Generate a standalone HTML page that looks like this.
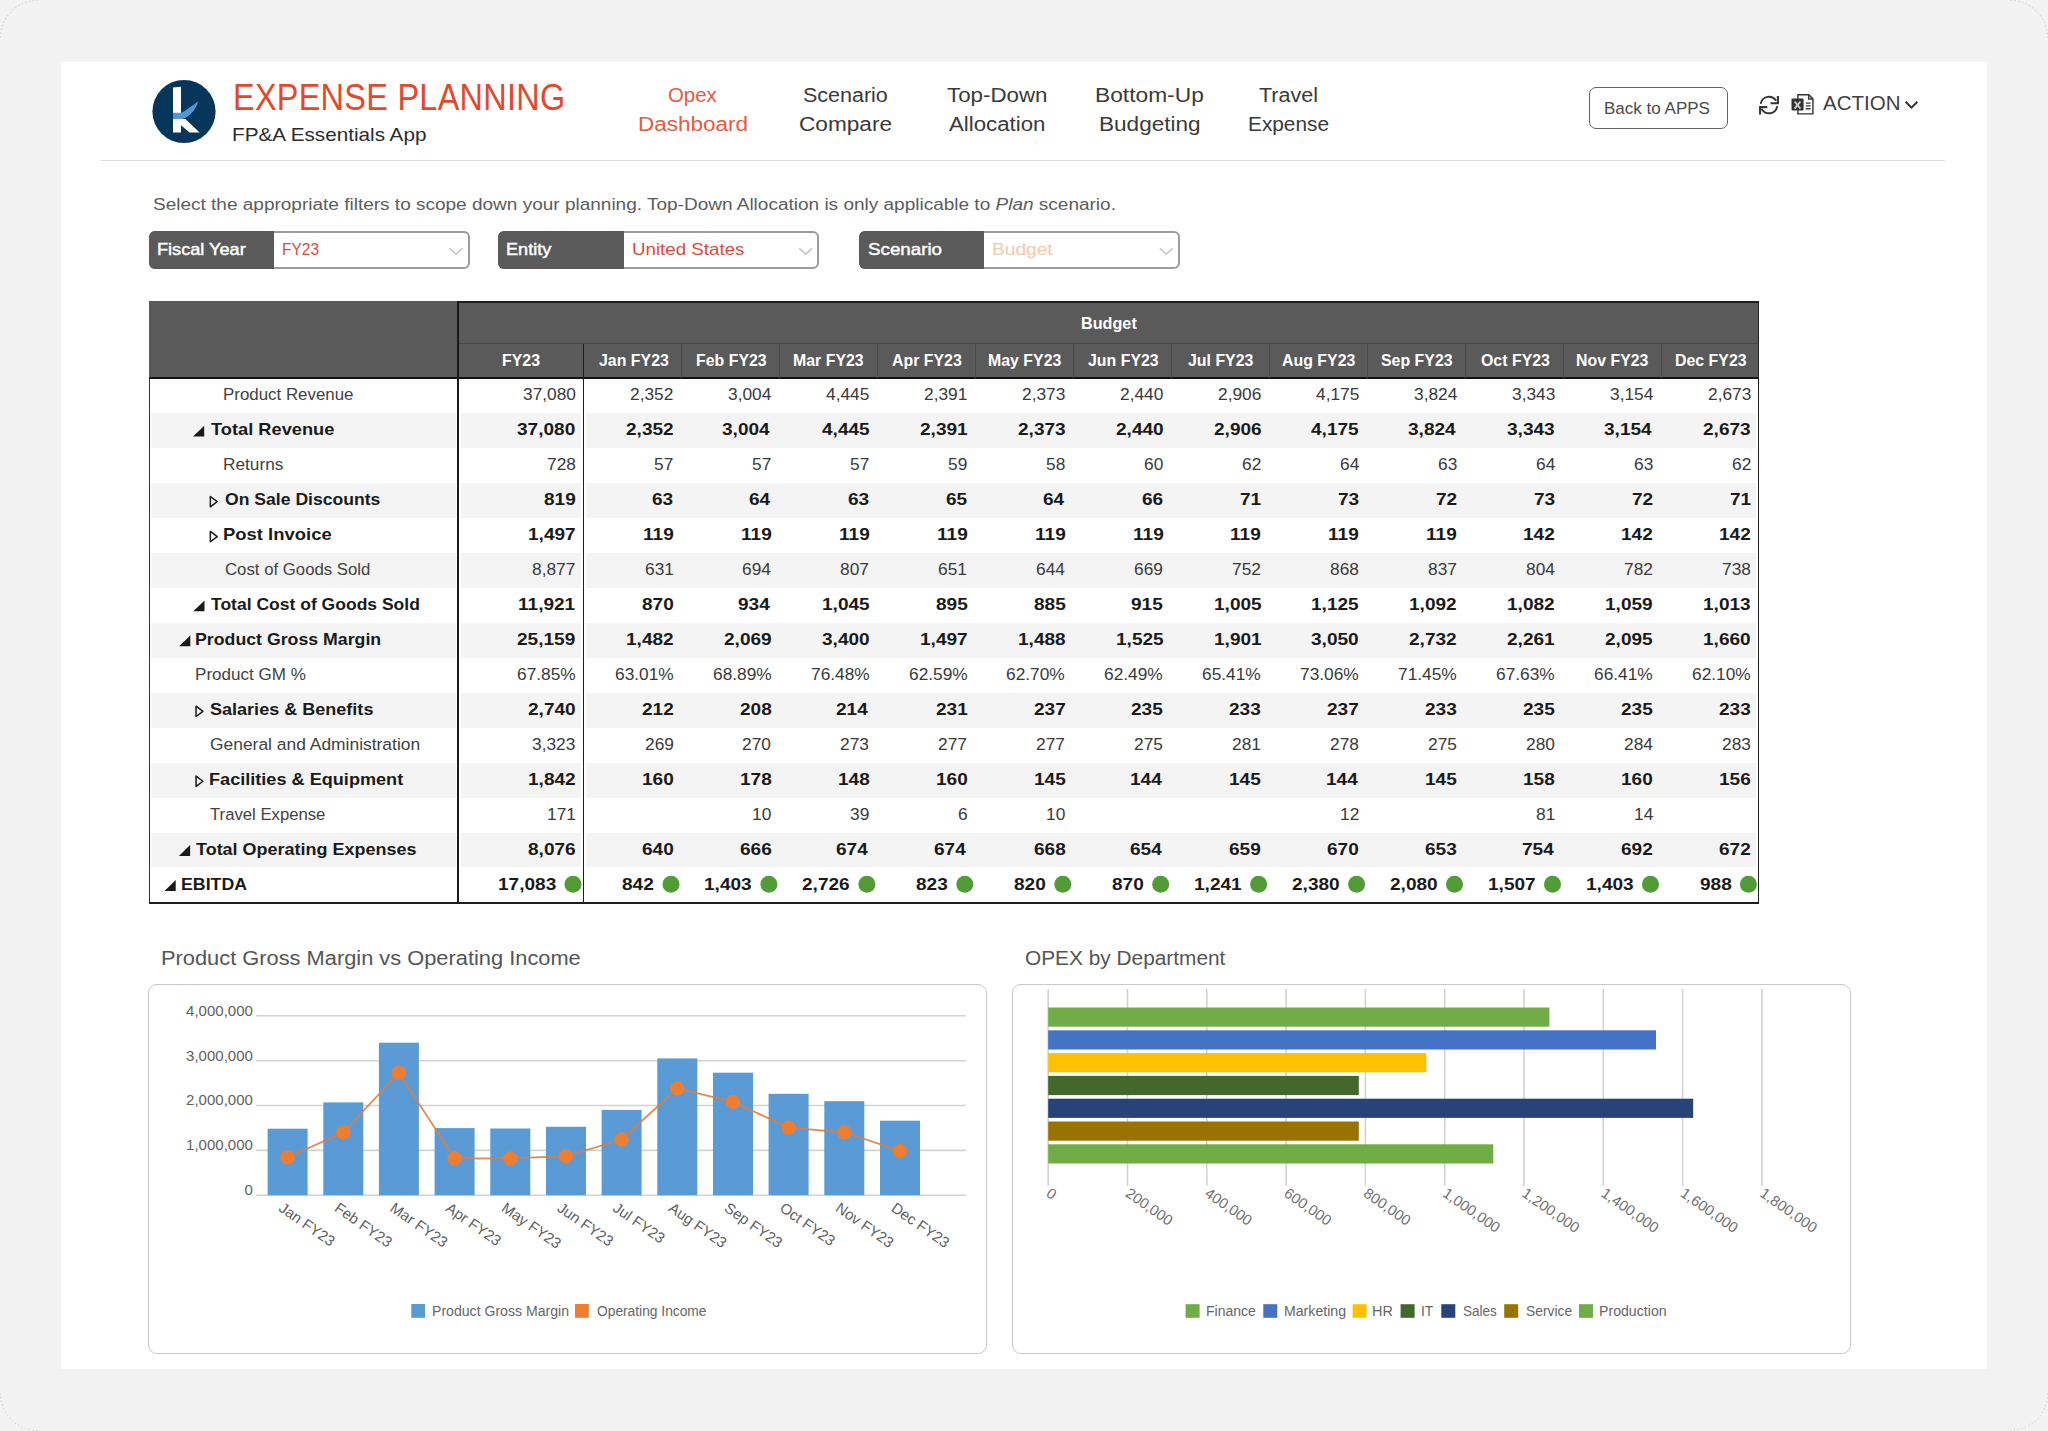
<!DOCTYPE html>
<html><head><meta charset="utf-8"><title>Expense Planning</title>
<style>
html,body{margin:0;padding:0;width:2048px;height:1431px;overflow:hidden;background:#f2f2f2;font-family:'Liberation Sans', sans-serif}
.t{position:absolute;white-space:pre;transform-origin:0 0}
svg text{font-family:'Liberation Sans', sans-serif}
</style></head><body>
<div style="position:absolute;left:61px;top:62px;width:1926px;height:1307px;background:#fff"></div><div style="position:absolute;left:1588.6px;top:86.9px;width:139.8px;height:41.9px;box-sizing:border-box;border:1.9px solid #626262;border-radius:7px"></div><div style="position:absolute;left:101px;top:160px;width:1844px;height:1px;background:#dcdcdc"></div><div style="position:absolute;left:148.6px;top:231.1px;width:321.2px;height:37.6px;box-sizing:border-box;border:2px solid #9c9c9c;border-radius:6px;background:#fff"></div><div style="position:absolute;left:148.6px;top:231.1px;width:125.4px;height:37.6px;background:#5a5a5a;border-radius:6px 0 0 6px"></div><div style="position:absolute;left:498.2px;top:231.1px;width:321.2px;height:37.6px;box-sizing:border-box;border:2px solid #9c9c9c;border-radius:6px;background:#fff"></div><div style="position:absolute;left:498.2px;top:231.1px;width:125.4px;height:37.6px;background:#5a5a5a;border-radius:6px 0 0 6px"></div><div style="position:absolute;left:858.8px;top:231.1px;width:321.2px;height:37.6px;box-sizing:border-box;border:2px solid #9c9c9c;border-radius:6px;background:#fff"></div><div style="position:absolute;left:858.8px;top:231.1px;width:125.4px;height:37.6px;background:#5a5a5a;border-radius:6px 0 0 6px"></div><div style="position:absolute;left:148.5px;top:301.0px;width:1610.8px;height:77.19999999999999px;background:#5a5a5a"></div><div style="position:absolute;left:150.5px;top:413.15px;width:305.2px;height:34.95px;background:#f4f4f4"></div><div style="position:absolute;left:460.7px;top:413.15px;width:120.59999999999997px;height:34.95px;background:#f4f4f4"></div><div style="position:absolute;left:586.3px;top:413.15px;width:1170.0px;height:34.95px;background:#f4f4f4"></div><div style="position:absolute;left:150.5px;top:483.05px;width:305.2px;height:34.95px;background:#f4f4f4"></div><div style="position:absolute;left:460.7px;top:483.05px;width:120.59999999999997px;height:34.95px;background:#f4f4f4"></div><div style="position:absolute;left:586.3px;top:483.05px;width:1170.0px;height:34.95px;background:#f4f4f4"></div><div style="position:absolute;left:150.5px;top:552.95px;width:305.2px;height:34.95px;background:#f4f4f4"></div><div style="position:absolute;left:460.7px;top:552.95px;width:120.59999999999997px;height:34.95px;background:#f4f4f4"></div><div style="position:absolute;left:586.3px;top:552.95px;width:1170.0px;height:34.95px;background:#f4f4f4"></div><div style="position:absolute;left:150.5px;top:622.85px;width:305.2px;height:34.95px;background:#f4f4f4"></div><div style="position:absolute;left:460.7px;top:622.85px;width:120.59999999999997px;height:34.95px;background:#f4f4f4"></div><div style="position:absolute;left:586.3px;top:622.85px;width:1170.0px;height:34.95px;background:#f4f4f4"></div><div style="position:absolute;left:150.5px;top:692.75px;width:305.2px;height:34.95px;background:#f4f4f4"></div><div style="position:absolute;left:460.7px;top:692.75px;width:120.59999999999997px;height:34.95px;background:#f4f4f4"></div><div style="position:absolute;left:586.3px;top:692.75px;width:1170.0px;height:34.95px;background:#f4f4f4"></div><div style="position:absolute;left:150.5px;top:762.6500000000001px;width:305.2px;height:34.95px;background:#f4f4f4"></div><div style="position:absolute;left:460.7px;top:762.6500000000001px;width:120.59999999999997px;height:34.95px;background:#f4f4f4"></div><div style="position:absolute;left:586.3px;top:762.6500000000001px;width:1170.0px;height:34.95px;background:#f4f4f4"></div><div style="position:absolute;left:150.5px;top:832.55px;width:305.2px;height:34.95px;background:#f4f4f4"></div><div style="position:absolute;left:460.7px;top:832.55px;width:120.59999999999997px;height:34.95px;background:#f4f4f4"></div><div style="position:absolute;left:586.3px;top:832.55px;width:1170.0px;height:34.95px;background:#f4f4f4"></div><div style="position:absolute;left:458.2px;top:301.0px;width:1301.1px;height:1.5px;background:#1e1e1e"></div><div style="position:absolute;left:458.9px;top:343.1px;width:1298.8999999999999px;height:1px;background:#484848"></div><div style="position:absolute;left:148.5px;top:377.4px;width:1610.8px;height:1.6px;background:#111"></div><div style="position:absolute;left:583.0999999999999px;top:343.6px;width:1.4px;height:559.9px;background:#1e1e1e"></div><div style="position:absolute;left:681.25px;top:343.6px;width:1px;height:34.599999999999966px;background:#4a4a4a"></div><div style="position:absolute;left:779.1999999999999px;top:343.6px;width:1px;height:34.599999999999966px;background:#4a4a4a"></div><div style="position:absolute;left:877.15px;top:343.6px;width:1px;height:34.599999999999966px;background:#4a4a4a"></div><div style="position:absolute;left:975.0999999999999px;top:343.6px;width:1px;height:34.599999999999966px;background:#4a4a4a"></div><div style="position:absolute;left:1073.05px;top:343.6px;width:1px;height:34.599999999999966px;background:#4a4a4a"></div><div style="position:absolute;left:1171.0px;top:343.6px;width:1px;height:34.599999999999966px;background:#4a4a4a"></div><div style="position:absolute;left:1268.9499999999998px;top:343.6px;width:1px;height:34.599999999999966px;background:#4a4a4a"></div><div style="position:absolute;left:1366.9px;top:343.6px;width:1px;height:34.599999999999966px;background:#4a4a4a"></div><div style="position:absolute;left:1464.85px;top:343.6px;width:1px;height:34.599999999999966px;background:#4a4a4a"></div><div style="position:absolute;left:1562.8px;top:343.6px;width:1px;height:34.599999999999966px;background:#4a4a4a"></div><div style="position:absolute;left:1660.75px;top:343.6px;width:1px;height:34.599999999999966px;background:#4a4a4a"></div><div style="position:absolute;left:1757.8px;top:301.0px;width:1.5px;height:602.5px;background:#1e1e1e"></div><div style="position:absolute;left:148.5px;top:378.2px;width:1.5px;height:525.3px;background:#333"></div><div style="position:absolute;left:148.5px;top:902.0px;width:1610.8px;height:1.5px;background:#1e1e1e"></div><div style="position:absolute;left:457.45px;top:301.0px;width:1.5px;height:602.5px;background:#1a1a1a"></div><div style="position:absolute;left:148.4px;top:983.5px;width:839px;height:370.5px;box-sizing:border-box;border:1.8px solid #c8c8c8;border-radius:9px"></div><div style="position:absolute;left:1012.2px;top:983.8px;width:838.8px;height:370.5px;box-sizing:border-box;border:1.8px solid #c8c8c8;border-radius:9px"></div>
<svg style="position:absolute;left:0;top:0" width="2048" height="1431" viewBox="0 0 2048 1431">
<g fill="none" stroke="#cfcfcf" stroke-width="1" stroke-dasharray="1.6 2.2"><path d="M0.5,37.5 A37,37 0 0 1 37.5,0.5"/><path d="M2010.5,0.5 A37,37 0 0 1 2047.5,37.5"/><path d="M2047.5,1393.5 A37,37 0 0 1 2010.5,1430.5"/><path d="M37.5,1430.5 A37,37 0 0 1 0.5,1393.5"/></g><circle cx="184" cy="111.5" r="31.6" fill="#06365a"/><path d="M173,87.6 L181,86.7 L181,132.4 L173,132.4 Z" fill="#fff"/><polygon points="181,119 185.4,119 199.6,132.4 189.6,132.4 181,125.2" fill="#fff"/><path d="M173,112.7 L180.5,112.7 Q184,112.2 189,108 L198.4,101.2 Q197,106 193.5,111 Q189,116.5 184,118.6 Q182,119.1 179,119.1 L173,119.1 Z" fill="#5596d6"/><g fill="none" stroke="#333" stroke-width="2" stroke-linecap="round"><path d="M1760.91,103.13 A8.3,8.3 0 0 1 1775.54,99.89"/><path d="M1777.09,106.87 A8.3,8.3 0 0 1 1762.04,109.52"/></g><path d="M1777.9,97 V103.2 H1771.6" fill="none" stroke="#333" stroke-width="2.1" stroke-linecap="square"/><path d="M1760.1,113.4 V107.1 H1766.2" fill="none" stroke="#333" stroke-width="2.1" stroke-linecap="square"/><path d="M1797.9,94.8 H1808.8 L1812.9,98.9 V113.9 H1797.9 Z" fill="none" stroke="#333" stroke-width="1.4"/><path d="M1808.6,94.8 V99.0 H1812.9" fill="none" stroke="#333" stroke-width="1.3"/><rect x="1791.5" y="98.4" width="12.1" height="12.1" rx="1.2" fill="#333"/><path d="M1794.6,101.5 L1800.4,108.6 M1800.4,101.5 L1794.6,108.6" stroke="#d0d0d0" stroke-width="1.8"/><path d="M1805.8,103.1 H1810.6 M1805.8,105.9 H1810.6 M1805.8,108.7 H1810.6" stroke="#3a3a3a" stroke-width="1.4"/><polyline points="1905.6,101.8 1911.5,107.6 1917.4,101.8" fill="none" stroke="#333" stroke-width="2"/><polyline points="449.6,248.3 456.0,254.2 462.4,248.3" fill="none" stroke="#c8c8c8" stroke-width="1.6"/><polyline points="799.2,248.3 805.5999999999999,254.2 812.0,248.3" fill="none" stroke="#c8c8c8" stroke-width="1.6"/><polyline points="1159.8,248.3 1166.1999999999998,254.2 1172.6,248.3" fill="none" stroke="#c8c8c8" stroke-width="1.6"/><polygon points="193.0,436.5 204.2,436.5 204.2,425.8" fill="#1a1a1a"/><polygon points="210.35,496.50 217.25,501.65 210.35,506.80" fill="none" stroke="#1a1a1a" stroke-width="1.5" stroke-linejoin="round"/><polygon points="210.35,531.45 217.25,536.60 210.35,541.75" fill="none" stroke="#1a1a1a" stroke-width="1.5" stroke-linejoin="round"/><polygon points="193.3,611.3 204.5,611.3 204.5,600.5" fill="#1a1a1a"/><polygon points="179.1,646.2 190.3,646.2 190.3,635.5" fill="#1a1a1a"/><polygon points="196.05,706.20 202.95,711.35 196.05,716.50" fill="none" stroke="#1a1a1a" stroke-width="1.5" stroke-linejoin="round"/><polygon points="196.05,776.10 202.95,781.25 196.05,786.40" fill="none" stroke="#1a1a1a" stroke-width="1.5" stroke-linejoin="round"/><polygon points="178.9,855.9 190.1,855.9 190.1,845.1" fill="#1a1a1a"/><polygon points="164.5,890.9 175.7,890.9 175.7,880.1" fill="#1a1a1a"/><circle cx="573.0" cy="884.3" r="8.5" fill="#529c38"/><circle cx="671.0" cy="884.3" r="8.5" fill="#529c38"/><circle cx="768.9" cy="884.3" r="8.5" fill="#529c38"/><circle cx="866.9" cy="884.3" r="8.5" fill="#529c38"/><circle cx="964.8" cy="884.3" r="8.5" fill="#529c38"/><circle cx="1062.8" cy="884.3" r="8.5" fill="#529c38"/><circle cx="1160.7" cy="884.3" r="8.5" fill="#529c38"/><circle cx="1258.6" cy="884.3" r="8.5" fill="#529c38"/><circle cx="1356.6" cy="884.3" r="8.5" fill="#529c38"/><circle cx="1454.5" cy="884.3" r="8.5" fill="#529c38"/><circle cx="1552.5" cy="884.3" r="8.5" fill="#529c38"/><circle cx="1650.5" cy="884.3" r="8.5" fill="#529c38"/><circle cx="1748.4" cy="884.3" r="8.5" fill="#529c38"/><line x1="256" y1="1195.2" x2="966" y2="1195.2" stroke="#d2d2d2" stroke-width="1.6"/><line x1="256" y1="1150.4" x2="966" y2="1150.4" stroke="#d2d2d2" stroke-width="1.6"/><line x1="256" y1="1105.5" x2="966" y2="1105.5" stroke="#d2d2d2" stroke-width="1.6"/><line x1="256" y1="1060.7" x2="966" y2="1060.7" stroke="#d2d2d2" stroke-width="1.6"/><line x1="256" y1="1015.8" x2="966" y2="1015.8" stroke="#d2d2d2" stroke-width="1.6"/><rect x="267.6" y="1128.7" width="40" height="66.5" fill="#5b9bd5"/><rect x="323.3" y="1102.4" width="40" height="92.8" fill="#5b9bd5"/><rect x="378.9" y="1042.7" width="40" height="152.5" fill="#5b9bd5"/><rect x="434.6" y="1128.1" width="40" height="67.1" fill="#5b9bd5"/><rect x="490.3" y="1128.5" width="40" height="66.7" fill="#5b9bd5"/><rect x="546.0" y="1126.8" width="40" height="68.4" fill="#5b9bd5"/><rect x="601.6" y="1109.9" width="40" height="85.3" fill="#5b9bd5"/><rect x="657.3" y="1058.4" width="40" height="136.8" fill="#5b9bd5"/><rect x="713.0" y="1072.7" width="40" height="122.5" fill="#5b9bd5"/><rect x="768.6" y="1093.8" width="40" height="101.4" fill="#5b9bd5"/><rect x="824.3" y="1101.2" width="40" height="94.0" fill="#5b9bd5"/><rect x="880.0" y="1120.7" width="40" height="74.5" fill="#5b9bd5"/><polyline points="287.6,1157.4 343.3,1132.3 398.9,1072.9 454.6,1158.3 510.3,1158.4 566.0,1156.2 621.6,1139.5 677.3,1088.5 733.0,1101.9 788.6,1127.6 844.3,1132.3 900.0,1150.9" fill="none" stroke="#e27a3c" stroke-width="1.7" stroke-opacity="0.9"/><circle cx="287.6" cy="1157.4" r="7.2" fill="#ed7d31"/><circle cx="343.3" cy="1132.3" r="7.2" fill="#ed7d31"/><circle cx="398.9" cy="1072.9" r="7.2" fill="#ed7d31"/><circle cx="454.6" cy="1158.3" r="7.2" fill="#ed7d31"/><circle cx="510.3" cy="1158.4" r="7.2" fill="#ed7d31"/><circle cx="566.0" cy="1156.2" r="7.2" fill="#ed7d31"/><circle cx="621.6" cy="1139.5" r="7.2" fill="#ed7d31"/><circle cx="677.3" cy="1088.5" r="7.2" fill="#ed7d31"/><circle cx="733.0" cy="1101.9" r="7.2" fill="#ed7d31"/><circle cx="788.6" cy="1127.6" r="7.2" fill="#ed7d31"/><circle cx="844.3" cy="1132.3" r="7.2" fill="#ed7d31"/><circle cx="900.0" cy="1150.9" r="7.2" fill="#ed7d31"/><text x="277.8" y="1210.2" transform="rotate(35 277.8 1210.2)" font-size="15" fill="#5f5f5f">Jan FY23</text><text x="333.5" y="1210.2" transform="rotate(35 333.5 1210.2)" font-size="15" fill="#5f5f5f">Feb FY23</text><text x="389.1" y="1210.2" transform="rotate(35 389.1 1210.2)" font-size="15" fill="#5f5f5f">Mar FY23</text><text x="444.8" y="1210.2" transform="rotate(35 444.8 1210.2)" font-size="15" fill="#5f5f5f">Apr FY23</text><text x="500.5" y="1210.2" transform="rotate(35 500.5 1210.2)" font-size="15" fill="#5f5f5f">May FY23</text><text x="556.2" y="1210.2" transform="rotate(35 556.2 1210.2)" font-size="15" fill="#5f5f5f">Jun FY23</text><text x="611.8" y="1210.2" transform="rotate(35 611.8 1210.2)" font-size="15" fill="#5f5f5f">Jul FY23</text><text x="667.5" y="1210.2" transform="rotate(35 667.5 1210.2)" font-size="15" fill="#5f5f5f">Aug FY23</text><text x="723.2" y="1210.2" transform="rotate(35 723.2 1210.2)" font-size="15" fill="#5f5f5f">Sep FY23</text><text x="778.8" y="1210.2" transform="rotate(35 778.8 1210.2)" font-size="15" fill="#5f5f5f">Oct FY23</text><text x="834.5" y="1210.2" transform="rotate(35 834.5 1210.2)" font-size="15" fill="#5f5f5f">Nov FY23</text><text x="890.2" y="1210.2" transform="rotate(35 890.2 1210.2)" font-size="15" fill="#5f5f5f">Dec FY23</text><rect x="411.3" y="1304" width="13.8" height="13.8" fill="#5b9bd5"/><rect x="575" y="1304" width="13.8" height="13.8" fill="#ed7d31"/><line x1="1048.2" y1="989" x2="1048.2" y2="1185.8" stroke="#d2d2d2" stroke-width="1.6"/><text x="1045.2" y="1195.6" transform="rotate(35 1045.2 1195.6)" font-size="14.8" fill="#6e6e6e">0</text><line x1="1127.5" y1="989" x2="1127.5" y2="1185.8" stroke="#d2d2d2" stroke-width="1.6"/><text x="1124.5" y="1195.6" transform="rotate(35 1124.5 1195.6)" font-size="14.8" fill="#6e6e6e">200,000</text><line x1="1206.8" y1="989" x2="1206.8" y2="1185.8" stroke="#d2d2d2" stroke-width="1.6"/><text x="1203.8" y="1195.6" transform="rotate(35 1203.8 1195.6)" font-size="14.8" fill="#6e6e6e">400,000</text><line x1="1286.1" y1="989" x2="1286.1" y2="1185.8" stroke="#d2d2d2" stroke-width="1.6"/><text x="1283.1" y="1195.6" transform="rotate(35 1283.1 1195.6)" font-size="14.8" fill="#6e6e6e">600,000</text><line x1="1365.4" y1="989" x2="1365.4" y2="1185.8" stroke="#d2d2d2" stroke-width="1.6"/><text x="1362.4" y="1195.6" transform="rotate(35 1362.4 1195.6)" font-size="14.8" fill="#6e6e6e">800,000</text><line x1="1444.7" y1="989" x2="1444.7" y2="1185.8" stroke="#d2d2d2" stroke-width="1.6"/><text x="1441.7" y="1195.6" transform="rotate(35 1441.7 1195.6)" font-size="14.8" fill="#6e6e6e">1,000,000</text><line x1="1524.0" y1="989" x2="1524.0" y2="1185.8" stroke="#d2d2d2" stroke-width="1.6"/><text x="1521.0" y="1195.6" transform="rotate(35 1521.0 1195.6)" font-size="14.8" fill="#6e6e6e">1,200,000</text><line x1="1603.3" y1="989" x2="1603.3" y2="1185.8" stroke="#d2d2d2" stroke-width="1.6"/><text x="1600.3" y="1195.6" transform="rotate(35 1600.3 1195.6)" font-size="14.8" fill="#6e6e6e">1,400,000</text><line x1="1682.6" y1="989" x2="1682.6" y2="1185.8" stroke="#d2d2d2" stroke-width="1.6"/><text x="1679.6" y="1195.6" transform="rotate(35 1679.6 1195.6)" font-size="14.8" fill="#6e6e6e">1,600,000</text><line x1="1761.9" y1="989" x2="1761.9" y2="1185.8" stroke="#d2d2d2" stroke-width="1.6"/><text x="1758.9" y="1195.6" transform="rotate(35 1758.9 1195.6)" font-size="14.8" fill="#6e6e6e">1,800,000</text><rect x="1048.2" y="1007.5" width="501.2" height="19.2" fill="#70ad47"/><rect x="1048.2" y="1030.3" width="607.8" height="19.2" fill="#4472c4"/><rect x="1048.2" y="1053.1" width="378.1" height="19.2" fill="#ffc000"/><rect x="1048.2" y="1075.9" width="310.6" height="19.2" fill="#43682b"/><rect x="1048.2" y="1098.7" width="645.0" height="19.2" fill="#264478"/><rect x="1048.2" y="1121.5" width="310.6" height="19.2" fill="#997300"/><rect x="1048.2" y="1144.3" width="445.1" height="19.2" fill="#70ad47"/><rect x="1185.6" y="1304.2" width="14" height="13.6" fill="#70ad47"/><rect x="1263.3" y="1304.2" width="14" height="13.6" fill="#4472c4"/><rect x="1352.6" y="1304.2" width="14" height="13.6" fill="#ffc000"/><rect x="1400.6" y="1304.2" width="14" height="13.6" fill="#43682b"/><rect x="1441.3" y="1304.2" width="14" height="13.6" fill="#264478"/><rect x="1504.2" y="1304.2" width="14" height="13.6" fill="#997300"/><rect x="1579" y="1304.2" width="14" height="13.6" fill="#70ad47"/>
</svg>
<div class="t" style="left:232.70px;top:79.73px;font:normal normal 36px/36px 'Liberation Sans', sans-serif;letter-spacing:0.326px;transform:scaleX(0.9000);color:#e2492b;">EXPENSE PLANNING</div><div class="t" style="left:231.91px;top:125.42px;font:normal normal 19px/19px 'Liberation Sans', sans-serif;transform:scaleX(1.0893);color:#2b2b2b;">FP&amp;A Essentials App</div><div class="t" style="left:668.20px;top:85.99px;font:normal normal 19.5px/19.5px 'Liberation Sans', sans-serif;transform:scaleX(1.0457);color:#e65b3f;">Opex</div><div class="t" style="left:637.55px;top:114.89px;font:normal normal 19.5px/19.5px 'Liberation Sans', sans-serif;transform:scaleX(1.1545);color:#e65b3f;">Dashboard</div><div class="t" style="left:802.50px;top:85.99px;font:normal normal 19.5px/19.5px 'Liberation Sans', sans-serif;transform:scaleX(1.1022);color:#3a3a3a;">Scenario</div><div class="t" style="left:799.00px;top:114.89px;font:normal normal 19.5px/19.5px 'Liberation Sans', sans-serif;transform:scaleX(1.1594);color:#3a3a3a;">Compare</div><div class="t" style="left:947.25px;top:85.99px;font:normal normal 19.5px/19.5px 'Liberation Sans', sans-serif;transform:scaleX(1.1444);color:#3a3a3a;">Top-Down</div><div class="t" style="left:949.25px;top:114.89px;font:normal normal 19.5px/19.5px 'Liberation Sans', sans-serif;transform:scaleX(1.1409);color:#3a3a3a;">Allocation</div><div class="t" style="left:1094.93px;top:85.99px;font:normal normal 19.5px/19.5px 'Liberation Sans', sans-serif;transform:scaleX(1.1673);color:#3a3a3a;">Bottom-Up</div><div class="t" style="left:1099.09px;top:114.89px;font:normal normal 19.5px/19.5px 'Liberation Sans', sans-serif;transform:scaleX(1.1572);color:#3a3a3a;">Budgeting</div><div class="t" style="left:1259.20px;top:85.99px;font:normal normal 19.5px/19.5px 'Liberation Sans', sans-serif;transform:scaleX(1.1031);color:#3a3a3a;">Travel</div><div class="t" style="left:1247.93px;top:114.89px;font:normal normal 19.5px/19.5px 'Liberation Sans', sans-serif;transform:scaleX(1.0670);color:#3a3a3a;">Expense</div><div class="t" style="left:1603.95px;top:99.80px;font:normal normal 16.3px/16.3px 'Liberation Sans', sans-serif;transform:scaleX(1.0454);color:#4a4a4a;">Back to APPS</div><div class="t" style="left:1823.40px;top:93.07px;font:normal normal 20px/20px 'Liberation Sans', sans-serif;transform:scaleX(1.0255);color:#404040;">ACTION</div><div class="t" style="left:153.00px;top:197.26px;font:normal normal 16px/16px 'Liberation Sans', sans-serif;transform:scaleX(1.1875);color:#5c5c5c;">Select the appropriate filters to scope down your planning. Top-Down Allocation is only applicable to <i>Plan</i> scenario.</div><div class="t" style="left:156.50px;top:240.63px;font:normal normal 16.5px/16.5px 'Liberation Sans', sans-serif;transform:scaleX(1.0992);color:#fff;-webkit-text-stroke:0.45px #fff">Fiscal Year</div><div class="t" style="left:282.46px;top:240.63px;font:normal normal 16.5px/16.5px 'Liberation Sans', sans-serif;transform:scaleX(0.9409);color:#e14a3a;">FY23</div><div class="t" style="left:506.10px;top:240.63px;font:normal normal 16.5px/16.5px 'Liberation Sans', sans-serif;transform:scaleX(1.0971);color:#fff;-webkit-text-stroke:0.45px #fff">Entity</div><div class="t" style="left:631.87px;top:240.63px;font:normal normal 16.5px/16.5px 'Liberation Sans', sans-serif;transform:scaleX(1.1349);color:#e14a3a;">United States</div><div class="t" style="left:867.80px;top:240.63px;font:normal normal 16.5px/16.5px 'Liberation Sans', sans-serif;transform:scaleX(1.1363);color:#fff;-webkit-text-stroke:0.45px #fff">Scenario</div><div class="t" style="left:992.44px;top:240.63px;font:normal normal 16.5px/16.5px 'Liberation Sans', sans-serif;transform:scaleX(1.1603);color:#f4c9a6;">Budget</div><div class="t" style="left:1080.97px;top:313.58px;font:normal bold 15px/15px 'Liberation Sans', sans-serif;transform:scale(1.0797,1.1200);color:#fff;">Budget</div><div class="t" style="left:502.15px;top:352.17px;font:normal bold 15px/15px 'Liberation Sans', sans-serif;transform:scale(1.0600,1.0500);color:#fff;">FY23</div><div class="t" style="left:598.55px;top:352.17px;font:normal bold 15px/15px 'Liberation Sans', sans-serif;transform:scale(1.0600,1.0500);color:#fff;">Jan FY23</div><div class="t" style="left:695.53px;top:352.17px;font:normal bold 15px/15px 'Liberation Sans', sans-serif;transform:scale(1.0600,1.0500);color:#fff;">Feb FY23</div><div class="t" style="left:793.48px;top:352.17px;font:normal bold 15px/15px 'Liberation Sans', sans-serif;transform:scale(1.0600,1.0500);color:#fff;">Mar FY23</div><div class="t" style="left:892.40px;top:352.17px;font:normal bold 15px/15px 'Liberation Sans', sans-serif;transform:scale(1.0600,1.0500);color:#fff;">Apr FY23</div><div class="t" style="left:988.05px;top:352.17px;font:normal bold 15px/15px 'Liberation Sans', sans-serif;transform:scale(1.0600,1.0500);color:#fff;">May FY23</div><div class="t" style="left:1087.86px;top:352.17px;font:normal bold 15px/15px 'Liberation Sans', sans-serif;transform:scale(1.0600,1.0500);color:#fff;">Jun FY23</div><div class="t" style="left:1188.46px;top:352.17px;font:normal bold 15px/15px 'Liberation Sans', sans-serif;transform:scale(1.0600,1.0500);color:#fff;">Jul FY23</div><div class="t" style="left:1282.44px;top:352.17px;font:normal bold 15px/15px 'Liberation Sans', sans-serif;transform:scale(1.0600,1.0500);color:#fff;">Aug FY23</div><div class="t" style="left:1381.27px;top:352.17px;font:normal bold 15px/15px 'Liberation Sans', sans-serif;transform:scale(1.0600,1.0500);color:#fff;">Sep FY23</div><div class="t" style="left:1480.54px;top:352.17px;font:normal bold 15px/15px 'Liberation Sans', sans-serif;transform:scale(1.0600,1.0500);color:#fff;">Oct FY23</div><div class="t" style="left:1576.20px;top:352.17px;font:normal bold 15px/15px 'Liberation Sans', sans-serif;transform:scale(1.0600,1.0500);color:#fff;">Nov FY23</div><div class="t" style="left:1674.58px;top:352.17px;font:normal bold 15px/15px 'Liberation Sans', sans-serif;transform:scale(1.0600,1.0500);color:#fff;">Dec FY23</div><div class="t" style="left:223.37px;top:386.23px;font:normal normal 15px/15px 'Liberation Sans', sans-serif;transform:scale(1.1260,1.1000);color:#424242;">Product Revenue</div><div class="t" style="left:522.51px;top:386.23px;font:normal normal 15px/15px 'Liberation Sans', sans-serif;transform:scale(1.1550,1.1000);color:#3a3a3a;">37,080</div><div class="t" style="left:630.09px;top:386.23px;font:normal normal 15px/15px 'Liberation Sans', sans-serif;transform:scale(1.1550,1.1000);color:#3a3a3a;">2,352</div><div class="t" style="left:728.04px;top:386.23px;font:normal normal 15px/15px 'Liberation Sans', sans-serif;transform:scale(1.1550,1.1000);color:#3a3a3a;">3,004</div><div class="t" style="left:825.99px;top:386.23px;font:normal normal 15px/15px 'Liberation Sans', sans-serif;transform:scale(1.1550,1.1000);color:#3a3a3a;">4,445</div><div class="t" style="left:923.94px;top:386.23px;font:normal normal 15px/15px 'Liberation Sans', sans-serif;transform:scale(1.1550,1.1000);color:#3a3a3a;">2,391</div><div class="t" style="left:1021.89px;top:386.23px;font:normal normal 15px/15px 'Liberation Sans', sans-serif;transform:scale(1.1550,1.1000);color:#3a3a3a;">2,373</div><div class="t" style="left:1119.84px;top:386.23px;font:normal normal 15px/15px 'Liberation Sans', sans-serif;transform:scale(1.1550,1.1000);color:#3a3a3a;">2,440</div><div class="t" style="left:1217.79px;top:386.23px;font:normal normal 15px/15px 'Liberation Sans', sans-serif;transform:scale(1.1550,1.1000);color:#3a3a3a;">2,906</div><div class="t" style="left:1315.74px;top:386.23px;font:normal normal 15px/15px 'Liberation Sans', sans-serif;transform:scale(1.1550,1.1000);color:#3a3a3a;">4,175</div><div class="t" style="left:1413.69px;top:386.23px;font:normal normal 15px/15px 'Liberation Sans', sans-serif;transform:scale(1.1550,1.1000);color:#3a3a3a;">3,824</div><div class="t" style="left:1511.64px;top:386.23px;font:normal normal 15px/15px 'Liberation Sans', sans-serif;transform:scale(1.1550,1.1000);color:#3a3a3a;">3,343</div><div class="t" style="left:1609.59px;top:386.23px;font:normal normal 15px/15px 'Liberation Sans', sans-serif;transform:scale(1.1550,1.1000);color:#3a3a3a;">3,154</div><div class="t" style="left:1707.54px;top:386.23px;font:normal normal 15px/15px 'Liberation Sans', sans-serif;transform:scale(1.1550,1.1000);color:#3a3a3a;">2,673</div><div class="t" style="left:210.50px;top:421.18px;font:normal bold 15px/15px 'Liberation Sans', sans-serif;transform:scale(1.2170,1.1000);color:#1a1a1a;">Total Revenue</div><div class="t" style="left:517.27px;top:421.18px;font:normal bold 15px/15px 'Liberation Sans', sans-serif;transform:scale(1.2700,1.1000);color:#1a1a1a;">37,080</div><div class="t" style="left:625.81px;top:421.18px;font:normal bold 15px/15px 'Liberation Sans', sans-serif;transform:scale(1.2700,1.1000);color:#1a1a1a;">2,352</div><div class="t" style="left:722.49px;top:421.18px;font:normal bold 15px/15px 'Liberation Sans', sans-serif;transform:scale(1.2700,1.1000);color:#1a1a1a;">3,004</div><div class="t" style="left:821.71px;top:421.18px;font:normal bold 15px/15px 'Liberation Sans', sans-serif;transform:scale(1.2700,1.1000);color:#1a1a1a;">4,445</div><div class="t" style="left:919.66px;top:421.18px;font:normal bold 15px/15px 'Liberation Sans', sans-serif;transform:scale(1.2700,1.1000);color:#1a1a1a;">2,391</div><div class="t" style="left:1017.61px;top:421.18px;font:normal bold 15px/15px 'Liberation Sans', sans-serif;transform:scale(1.2700,1.1000);color:#1a1a1a;">2,373</div><div class="t" style="left:1115.56px;top:421.18px;font:normal bold 15px/15px 'Liberation Sans', sans-serif;transform:scale(1.2700,1.1000);color:#1a1a1a;">2,440</div><div class="t" style="left:1213.51px;top:421.18px;font:normal bold 15px/15px 'Liberation Sans', sans-serif;transform:scale(1.2700,1.1000);color:#1a1a1a;">2,906</div><div class="t" style="left:1311.46px;top:421.18px;font:normal bold 15px/15px 'Liberation Sans', sans-serif;transform:scale(1.2700,1.1000);color:#1a1a1a;">4,175</div><div class="t" style="left:1408.14px;top:421.18px;font:normal bold 15px/15px 'Liberation Sans', sans-serif;transform:scale(1.2700,1.1000);color:#1a1a1a;">3,824</div><div class="t" style="left:1507.36px;top:421.18px;font:normal bold 15px/15px 'Liberation Sans', sans-serif;transform:scale(1.2700,1.1000);color:#1a1a1a;">3,343</div><div class="t" style="left:1604.04px;top:421.18px;font:normal bold 15px/15px 'Liberation Sans', sans-serif;transform:scale(1.2700,1.1000);color:#1a1a1a;">3,154</div><div class="t" style="left:1703.26px;top:421.18px;font:normal bold 15px/15px 'Liberation Sans', sans-serif;transform:scale(1.2700,1.1000);color:#1a1a1a;">2,673</div><div class="t" style="left:223.35px;top:456.13px;font:normal normal 15px/15px 'Liberation Sans', sans-serif;transform:scale(1.1505,1.1000);color:#424242;">Returns</div><div class="t" style="left:546.59px;top:456.13px;font:normal normal 15px/15px 'Liberation Sans', sans-serif;transform:scale(1.1550,1.1000);color:#3a3a3a;">728</div><div class="t" style="left:654.17px;top:456.13px;font:normal normal 15px/15px 'Liberation Sans', sans-serif;transform:scale(1.1550,1.1000);color:#3a3a3a;">57</div><div class="t" style="left:752.12px;top:456.13px;font:normal normal 15px/15px 'Liberation Sans', sans-serif;transform:scale(1.1550,1.1000);color:#3a3a3a;">57</div><div class="t" style="left:850.07px;top:456.13px;font:normal normal 15px/15px 'Liberation Sans', sans-serif;transform:scale(1.1550,1.1000);color:#3a3a3a;">57</div><div class="t" style="left:948.02px;top:456.13px;font:normal normal 15px/15px 'Liberation Sans', sans-serif;transform:scale(1.1550,1.1000);color:#3a3a3a;">59</div><div class="t" style="left:1045.97px;top:456.13px;font:normal normal 15px/15px 'Liberation Sans', sans-serif;transform:scale(1.1550,1.1000);color:#3a3a3a;">58</div><div class="t" style="left:1143.92px;top:456.13px;font:normal normal 15px/15px 'Liberation Sans', sans-serif;transform:scale(1.1550,1.1000);color:#3a3a3a;">60</div><div class="t" style="left:1241.87px;top:456.13px;font:normal normal 15px/15px 'Liberation Sans', sans-serif;transform:scale(1.1550,1.1000);color:#3a3a3a;">62</div><div class="t" style="left:1339.82px;top:456.13px;font:normal normal 15px/15px 'Liberation Sans', sans-serif;transform:scale(1.1550,1.1000);color:#3a3a3a;">64</div><div class="t" style="left:1437.77px;top:456.13px;font:normal normal 15px/15px 'Liberation Sans', sans-serif;transform:scale(1.1550,1.1000);color:#3a3a3a;">63</div><div class="t" style="left:1535.72px;top:456.13px;font:normal normal 15px/15px 'Liberation Sans', sans-serif;transform:scale(1.1550,1.1000);color:#3a3a3a;">64</div><div class="t" style="left:1633.67px;top:456.13px;font:normal normal 15px/15px 'Liberation Sans', sans-serif;transform:scale(1.1550,1.1000);color:#3a3a3a;">63</div><div class="t" style="left:1731.62px;top:456.13px;font:normal normal 15px/15px 'Liberation Sans', sans-serif;transform:scale(1.1550,1.1000);color:#3a3a3a;">62</div><div class="t" style="left:224.60px;top:491.08px;font:normal bold 15px/15px 'Liberation Sans', sans-serif;transform:scale(1.1726,1.1000);color:#1a1a1a;">On Sale Discounts</div><div class="t" style="left:543.75px;top:491.08px;font:normal bold 15px/15px 'Liberation Sans', sans-serif;transform:scale(1.2700,1.1000);color:#1a1a1a;">819</div><div class="t" style="left:652.30px;top:491.08px;font:normal bold 15px/15px 'Liberation Sans', sans-serif;transform:scale(1.2700,1.1000);color:#1a1a1a;">63</div><div class="t" style="left:748.98px;top:491.08px;font:normal bold 15px/15px 'Liberation Sans', sans-serif;transform:scale(1.2700,1.1000);color:#1a1a1a;">64</div><div class="t" style="left:848.20px;top:491.08px;font:normal bold 15px/15px 'Liberation Sans', sans-serif;transform:scale(1.2700,1.1000);color:#1a1a1a;">63</div><div class="t" style="left:946.15px;top:491.08px;font:normal bold 15px/15px 'Liberation Sans', sans-serif;transform:scale(1.2700,1.1000);color:#1a1a1a;">65</div><div class="t" style="left:1042.83px;top:491.08px;font:normal bold 15px/15px 'Liberation Sans', sans-serif;transform:scale(1.2700,1.1000);color:#1a1a1a;">64</div><div class="t" style="left:1142.05px;top:491.08px;font:normal bold 15px/15px 'Liberation Sans', sans-serif;transform:scale(1.2700,1.1000);color:#1a1a1a;">66</div><div class="t" style="left:1240.00px;top:491.08px;font:normal bold 15px/15px 'Liberation Sans', sans-serif;transform:scale(1.2700,1.1000);color:#1a1a1a;">71</div><div class="t" style="left:1337.95px;top:491.08px;font:normal bold 15px/15px 'Liberation Sans', sans-serif;transform:scale(1.2700,1.1000);color:#1a1a1a;">73</div><div class="t" style="left:1435.90px;top:491.08px;font:normal bold 15px/15px 'Liberation Sans', sans-serif;transform:scale(1.2700,1.1000);color:#1a1a1a;">72</div><div class="t" style="left:1533.85px;top:491.08px;font:normal bold 15px/15px 'Liberation Sans', sans-serif;transform:scale(1.2700,1.1000);color:#1a1a1a;">73</div><div class="t" style="left:1631.80px;top:491.08px;font:normal bold 15px/15px 'Liberation Sans', sans-serif;transform:scale(1.2700,1.1000);color:#1a1a1a;">72</div><div class="t" style="left:1729.75px;top:491.08px;font:normal bold 15px/15px 'Liberation Sans', sans-serif;transform:scale(1.2700,1.1000);color:#1a1a1a;">71</div><div class="t" style="left:223.37px;top:526.03px;font:normal bold 15px/15px 'Liberation Sans', sans-serif;transform:scale(1.2296,1.1000);color:#1a1a1a;">Post Invoice</div><div class="t" style="left:527.86px;top:526.03px;font:normal bold 15px/15px 'Liberation Sans', sans-serif;transform:scale(1.2700,1.1000);color:#1a1a1a;">1,497</div><div class="t" style="left:642.75px;top:526.03px;font:normal bold 15px/15px 'Liberation Sans', sans-serif;transform:scale(1.2700,1.1000);color:#1a1a1a;">119</div><div class="t" style="left:740.70px;top:526.03px;font:normal bold 15px/15px 'Liberation Sans', sans-serif;transform:scale(1.2700,1.1000);color:#1a1a1a;">119</div><div class="t" style="left:838.65px;top:526.03px;font:normal bold 15px/15px 'Liberation Sans', sans-serif;transform:scale(1.2700,1.1000);color:#1a1a1a;">119</div><div class="t" style="left:936.60px;top:526.03px;font:normal bold 15px/15px 'Liberation Sans', sans-serif;transform:scale(1.2700,1.1000);color:#1a1a1a;">119</div><div class="t" style="left:1034.55px;top:526.03px;font:normal bold 15px/15px 'Liberation Sans', sans-serif;transform:scale(1.2700,1.1000);color:#1a1a1a;">119</div><div class="t" style="left:1132.50px;top:526.03px;font:normal bold 15px/15px 'Liberation Sans', sans-serif;transform:scale(1.2700,1.1000);color:#1a1a1a;">119</div><div class="t" style="left:1230.45px;top:526.03px;font:normal bold 15px/15px 'Liberation Sans', sans-serif;transform:scale(1.2700,1.1000);color:#1a1a1a;">119</div><div class="t" style="left:1328.40px;top:526.03px;font:normal bold 15px/15px 'Liberation Sans', sans-serif;transform:scale(1.2700,1.1000);color:#1a1a1a;">119</div><div class="t" style="left:1426.35px;top:526.03px;font:normal bold 15px/15px 'Liberation Sans', sans-serif;transform:scale(1.2700,1.1000);color:#1a1a1a;">119</div><div class="t" style="left:1523.25px;top:526.03px;font:normal bold 15px/15px 'Liberation Sans', sans-serif;transform:scale(1.2700,1.1000);color:#1a1a1a;">142</div><div class="t" style="left:1621.20px;top:526.03px;font:normal bold 15px/15px 'Liberation Sans', sans-serif;transform:scale(1.2700,1.1000);color:#1a1a1a;">142</div><div class="t" style="left:1719.15px;top:526.03px;font:normal bold 15px/15px 'Liberation Sans', sans-serif;transform:scale(1.2700,1.1000);color:#1a1a1a;">142</div><div class="t" style="left:224.70px;top:560.98px;font:normal normal 15px/15px 'Liberation Sans', sans-serif;transform:scale(1.1177,1.1000);color:#424242;">Cost of Goods Sold</div><div class="t" style="left:532.14px;top:560.98px;font:normal normal 15px/15px 'Liberation Sans', sans-serif;transform:scale(1.1550,1.1000);color:#3a3a3a;">8,877</div><div class="t" style="left:644.54px;top:560.98px;font:normal normal 15px/15px 'Liberation Sans', sans-serif;transform:scale(1.1550,1.1000);color:#3a3a3a;">631</div><div class="t" style="left:742.49px;top:560.98px;font:normal normal 15px/15px 'Liberation Sans', sans-serif;transform:scale(1.1550,1.1000);color:#3a3a3a;">694</div><div class="t" style="left:840.44px;top:560.98px;font:normal normal 15px/15px 'Liberation Sans', sans-serif;transform:scale(1.1550,1.1000);color:#3a3a3a;">807</div><div class="t" style="left:938.39px;top:560.98px;font:normal normal 15px/15px 'Liberation Sans', sans-serif;transform:scale(1.1550,1.1000);color:#3a3a3a;">651</div><div class="t" style="left:1036.34px;top:560.98px;font:normal normal 15px/15px 'Liberation Sans', sans-serif;transform:scale(1.1550,1.1000);color:#3a3a3a;">644</div><div class="t" style="left:1134.29px;top:560.98px;font:normal normal 15px/15px 'Liberation Sans', sans-serif;transform:scale(1.1550,1.1000);color:#3a3a3a;">669</div><div class="t" style="left:1232.24px;top:560.98px;font:normal normal 15px/15px 'Liberation Sans', sans-serif;transform:scale(1.1550,1.1000);color:#3a3a3a;">752</div><div class="t" style="left:1330.19px;top:560.98px;font:normal normal 15px/15px 'Liberation Sans', sans-serif;transform:scale(1.1550,1.1000);color:#3a3a3a;">868</div><div class="t" style="left:1428.14px;top:560.98px;font:normal normal 15px/15px 'Liberation Sans', sans-serif;transform:scale(1.1550,1.1000);color:#3a3a3a;">837</div><div class="t" style="left:1526.09px;top:560.98px;font:normal normal 15px/15px 'Liberation Sans', sans-serif;transform:scale(1.1550,1.1000);color:#3a3a3a;">804</div><div class="t" style="left:1624.04px;top:560.98px;font:normal normal 15px/15px 'Liberation Sans', sans-serif;transform:scale(1.1550,1.1000);color:#3a3a3a;">782</div><div class="t" style="left:1721.99px;top:560.98px;font:normal normal 15px/15px 'Liberation Sans', sans-serif;transform:scale(1.1550,1.1000);color:#3a3a3a;">738</div><div class="t" style="left:210.80px;top:595.93px;font:normal bold 15px/15px 'Liberation Sans', sans-serif;transform:scale(1.1678,1.1000);color:#1a1a1a;">Total Cost of Goods Sold</div><div class="t" style="left:518.32px;top:595.93px;font:normal bold 15px/15px 'Liberation Sans', sans-serif;transform:scale(1.2700,1.1000);color:#1a1a1a;">11,921</div><div class="t" style="left:641.70px;top:595.93px;font:normal bold 15px/15px 'Liberation Sans', sans-serif;transform:scale(1.2700,1.1000);color:#1a1a1a;">870</div><div class="t" style="left:738.38px;top:595.93px;font:normal bold 15px/15px 'Liberation Sans', sans-serif;transform:scale(1.2700,1.1000);color:#1a1a1a;">934</div><div class="t" style="left:821.71px;top:595.93px;font:normal bold 15px/15px 'Liberation Sans', sans-serif;transform:scale(1.2700,1.1000);color:#1a1a1a;">1,045</div><div class="t" style="left:935.55px;top:595.93px;font:normal bold 15px/15px 'Liberation Sans', sans-serif;transform:scale(1.2700,1.1000);color:#1a1a1a;">895</div><div class="t" style="left:1033.50px;top:595.93px;font:normal bold 15px/15px 'Liberation Sans', sans-serif;transform:scale(1.2700,1.1000);color:#1a1a1a;">885</div><div class="t" style="left:1131.45px;top:595.93px;font:normal bold 15px/15px 'Liberation Sans', sans-serif;transform:scale(1.2700,1.1000);color:#1a1a1a;">915</div><div class="t" style="left:1213.51px;top:595.93px;font:normal bold 15px/15px 'Liberation Sans', sans-serif;transform:scale(1.2700,1.1000);color:#1a1a1a;">1,005</div><div class="t" style="left:1311.46px;top:595.93px;font:normal bold 15px/15px 'Liberation Sans', sans-serif;transform:scale(1.2700,1.1000);color:#1a1a1a;">1,125</div><div class="t" style="left:1409.41px;top:595.93px;font:normal bold 15px/15px 'Liberation Sans', sans-serif;transform:scale(1.2700,1.1000);color:#1a1a1a;">1,092</div><div class="t" style="left:1507.36px;top:595.93px;font:normal bold 15px/15px 'Liberation Sans', sans-serif;transform:scale(1.2700,1.1000);color:#1a1a1a;">1,082</div><div class="t" style="left:1605.31px;top:595.93px;font:normal bold 15px/15px 'Liberation Sans', sans-serif;transform:scale(1.2700,1.1000);color:#1a1a1a;">1,059</div><div class="t" style="left:1703.26px;top:595.93px;font:normal bold 15px/15px 'Liberation Sans', sans-serif;transform:scale(1.2700,1.1000);color:#1a1a1a;">1,013</div><div class="t" style="left:195.42px;top:630.88px;font:normal bold 15px/15px 'Liberation Sans', sans-serif;transform:scale(1.1819,1.1000);color:#1a1a1a;">Product Gross Margin</div><div class="t" style="left:517.27px;top:630.88px;font:normal bold 15px/15px 'Liberation Sans', sans-serif;transform:scale(1.2700,1.1000);color:#1a1a1a;">25,159</div><div class="t" style="left:625.81px;top:630.88px;font:normal bold 15px/15px 'Liberation Sans', sans-serif;transform:scale(1.2700,1.1000);color:#1a1a1a;">1,482</div><div class="t" style="left:723.76px;top:630.88px;font:normal bold 15px/15px 'Liberation Sans', sans-serif;transform:scale(1.2700,1.1000);color:#1a1a1a;">2,069</div><div class="t" style="left:821.71px;top:630.88px;font:normal bold 15px/15px 'Liberation Sans', sans-serif;transform:scale(1.2700,1.1000);color:#1a1a1a;">3,400</div><div class="t" style="left:919.66px;top:630.88px;font:normal bold 15px/15px 'Liberation Sans', sans-serif;transform:scale(1.2700,1.1000);color:#1a1a1a;">1,497</div><div class="t" style="left:1017.61px;top:630.88px;font:normal bold 15px/15px 'Liberation Sans', sans-serif;transform:scale(1.2700,1.1000);color:#1a1a1a;">1,488</div><div class="t" style="left:1115.56px;top:630.88px;font:normal bold 15px/15px 'Liberation Sans', sans-serif;transform:scale(1.2700,1.1000);color:#1a1a1a;">1,525</div><div class="t" style="left:1213.51px;top:630.88px;font:normal bold 15px/15px 'Liberation Sans', sans-serif;transform:scale(1.2700,1.1000);color:#1a1a1a;">1,901</div><div class="t" style="left:1311.46px;top:630.88px;font:normal bold 15px/15px 'Liberation Sans', sans-serif;transform:scale(1.2700,1.1000);color:#1a1a1a;">3,050</div><div class="t" style="left:1409.41px;top:630.88px;font:normal bold 15px/15px 'Liberation Sans', sans-serif;transform:scale(1.2700,1.1000);color:#1a1a1a;">2,732</div><div class="t" style="left:1507.36px;top:630.88px;font:normal bold 15px/15px 'Liberation Sans', sans-serif;transform:scale(1.2700,1.1000);color:#1a1a1a;">2,261</div><div class="t" style="left:1605.31px;top:630.88px;font:normal bold 15px/15px 'Liberation Sans', sans-serif;transform:scale(1.2700,1.1000);color:#1a1a1a;">2,095</div><div class="t" style="left:1703.26px;top:630.88px;font:normal bold 15px/15px 'Liberation Sans', sans-serif;transform:scale(1.2700,1.1000);color:#1a1a1a;">1,660</div><div class="t" style="left:195.46px;top:665.83px;font:normal normal 15px/15px 'Liberation Sans', sans-serif;transform:scale(1.1373,1.1000);color:#424242;">Product GM %</div><div class="t" style="left:516.73px;top:665.83px;font:normal normal 15px/15px 'Liberation Sans', sans-serif;transform:scale(1.1550,1.1000);color:#3a3a3a;">67.85%</div><div class="t" style="left:614.68px;top:665.83px;font:normal normal 15px/15px 'Liberation Sans', sans-serif;transform:scale(1.1550,1.1000);color:#3a3a3a;">63.01%</div><div class="t" style="left:712.63px;top:665.83px;font:normal normal 15px/15px 'Liberation Sans', sans-serif;transform:scale(1.1550,1.1000);color:#3a3a3a;">68.89%</div><div class="t" style="left:810.58px;top:665.83px;font:normal normal 15px/15px 'Liberation Sans', sans-serif;transform:scale(1.1550,1.1000);color:#3a3a3a;">76.48%</div><div class="t" style="left:908.53px;top:665.83px;font:normal normal 15px/15px 'Liberation Sans', sans-serif;transform:scale(1.1550,1.1000);color:#3a3a3a;">62.59%</div><div class="t" style="left:1006.48px;top:665.83px;font:normal normal 15px/15px 'Liberation Sans', sans-serif;transform:scale(1.1550,1.1000);color:#3a3a3a;">62.70%</div><div class="t" style="left:1104.43px;top:665.83px;font:normal normal 15px/15px 'Liberation Sans', sans-serif;transform:scale(1.1550,1.1000);color:#3a3a3a;">62.49%</div><div class="t" style="left:1202.38px;top:665.83px;font:normal normal 15px/15px 'Liberation Sans', sans-serif;transform:scale(1.1550,1.1000);color:#3a3a3a;">65.41%</div><div class="t" style="left:1300.33px;top:665.83px;font:normal normal 15px/15px 'Liberation Sans', sans-serif;transform:scale(1.1550,1.1000);color:#3a3a3a;">73.06%</div><div class="t" style="left:1398.28px;top:665.83px;font:normal normal 15px/15px 'Liberation Sans', sans-serif;transform:scale(1.1550,1.1000);color:#3a3a3a;">71.45%</div><div class="t" style="left:1496.23px;top:665.83px;font:normal normal 15px/15px 'Liberation Sans', sans-serif;transform:scale(1.1550,1.1000);color:#3a3a3a;">67.63%</div><div class="t" style="left:1594.18px;top:665.83px;font:normal normal 15px/15px 'Liberation Sans', sans-serif;transform:scale(1.1550,1.1000);color:#3a3a3a;">66.41%</div><div class="t" style="left:1692.13px;top:665.83px;font:normal normal 15px/15px 'Liberation Sans', sans-serif;transform:scale(1.1550,1.1000);color:#3a3a3a;">62.10%</div><div class="t" style="left:210.30px;top:700.78px;font:normal bold 15px/15px 'Liberation Sans', sans-serif;transform:scale(1.2025,1.1000);color:#1a1a1a;">Salaries &amp; Benefits</div><div class="t" style="left:527.86px;top:700.78px;font:normal bold 15px/15px 'Liberation Sans', sans-serif;transform:scale(1.2700,1.1000);color:#1a1a1a;">2,740</div><div class="t" style="left:641.70px;top:700.78px;font:normal bold 15px/15px 'Liberation Sans', sans-serif;transform:scale(1.2700,1.1000);color:#1a1a1a;">212</div><div class="t" style="left:739.65px;top:700.78px;font:normal bold 15px/15px 'Liberation Sans', sans-serif;transform:scale(1.2700,1.1000);color:#1a1a1a;">208</div><div class="t" style="left:836.33px;top:700.78px;font:normal bold 15px/15px 'Liberation Sans', sans-serif;transform:scale(1.2700,1.1000);color:#1a1a1a;">214</div><div class="t" style="left:935.55px;top:700.78px;font:normal bold 15px/15px 'Liberation Sans', sans-serif;transform:scale(1.2700,1.1000);color:#1a1a1a;">231</div><div class="t" style="left:1033.50px;top:700.78px;font:normal bold 15px/15px 'Liberation Sans', sans-serif;transform:scale(1.2700,1.1000);color:#1a1a1a;">237</div><div class="t" style="left:1131.45px;top:700.78px;font:normal bold 15px/15px 'Liberation Sans', sans-serif;transform:scale(1.2700,1.1000);color:#1a1a1a;">235</div><div class="t" style="left:1229.40px;top:700.78px;font:normal bold 15px/15px 'Liberation Sans', sans-serif;transform:scale(1.2700,1.1000);color:#1a1a1a;">233</div><div class="t" style="left:1327.35px;top:700.78px;font:normal bold 15px/15px 'Liberation Sans', sans-serif;transform:scale(1.2700,1.1000);color:#1a1a1a;">237</div><div class="t" style="left:1425.30px;top:700.78px;font:normal bold 15px/15px 'Liberation Sans', sans-serif;transform:scale(1.2700,1.1000);color:#1a1a1a;">233</div><div class="t" style="left:1523.25px;top:700.78px;font:normal bold 15px/15px 'Liberation Sans', sans-serif;transform:scale(1.2700,1.1000);color:#1a1a1a;">235</div><div class="t" style="left:1621.20px;top:700.78px;font:normal bold 15px/15px 'Liberation Sans', sans-serif;transform:scale(1.2700,1.1000);color:#1a1a1a;">235</div><div class="t" style="left:1719.15px;top:700.78px;font:normal bold 15px/15px 'Liberation Sans', sans-serif;transform:scale(1.2700,1.1000);color:#1a1a1a;">233</div><div class="t" style="left:210.30px;top:735.73px;font:normal normal 15px/15px 'Liberation Sans', sans-serif;transform:scale(1.1614,1.1000);color:#424242;">General and Administration</div><div class="t" style="left:532.14px;top:735.73px;font:normal normal 15px/15px 'Liberation Sans', sans-serif;transform:scale(1.1550,1.1000);color:#3a3a3a;">3,323</div><div class="t" style="left:644.54px;top:735.73px;font:normal normal 15px/15px 'Liberation Sans', sans-serif;transform:scale(1.1550,1.1000);color:#3a3a3a;">269</div><div class="t" style="left:742.49px;top:735.73px;font:normal normal 15px/15px 'Liberation Sans', sans-serif;transform:scale(1.1550,1.1000);color:#3a3a3a;">270</div><div class="t" style="left:840.44px;top:735.73px;font:normal normal 15px/15px 'Liberation Sans', sans-serif;transform:scale(1.1550,1.1000);color:#3a3a3a;">273</div><div class="t" style="left:938.39px;top:735.73px;font:normal normal 15px/15px 'Liberation Sans', sans-serif;transform:scale(1.1550,1.1000);color:#3a3a3a;">277</div><div class="t" style="left:1036.34px;top:735.73px;font:normal normal 15px/15px 'Liberation Sans', sans-serif;transform:scale(1.1550,1.1000);color:#3a3a3a;">277</div><div class="t" style="left:1134.29px;top:735.73px;font:normal normal 15px/15px 'Liberation Sans', sans-serif;transform:scale(1.1550,1.1000);color:#3a3a3a;">275</div><div class="t" style="left:1232.24px;top:735.73px;font:normal normal 15px/15px 'Liberation Sans', sans-serif;transform:scale(1.1550,1.1000);color:#3a3a3a;">281</div><div class="t" style="left:1330.19px;top:735.73px;font:normal normal 15px/15px 'Liberation Sans', sans-serif;transform:scale(1.1550,1.1000);color:#3a3a3a;">278</div><div class="t" style="left:1428.14px;top:735.73px;font:normal normal 15px/15px 'Liberation Sans', sans-serif;transform:scale(1.1550,1.1000);color:#3a3a3a;">275</div><div class="t" style="left:1526.09px;top:735.73px;font:normal normal 15px/15px 'Liberation Sans', sans-serif;transform:scale(1.1550,1.1000);color:#3a3a3a;">280</div><div class="t" style="left:1624.04px;top:735.73px;font:normal normal 15px/15px 'Liberation Sans', sans-serif;transform:scale(1.1550,1.1000);color:#3a3a3a;">284</div><div class="t" style="left:1721.99px;top:735.73px;font:normal normal 15px/15px 'Liberation Sans', sans-serif;transform:scale(1.1550,1.1000);color:#3a3a3a;">283</div><div class="t" style="left:209.09px;top:770.68px;font:normal bold 15px/15px 'Liberation Sans', sans-serif;transform:scale(1.2073,1.1000);color:#1a1a1a;">Facilities &amp; Equipment</div><div class="t" style="left:527.86px;top:770.68px;font:normal bold 15px/15px 'Liberation Sans', sans-serif;transform:scale(1.2700,1.1000);color:#1a1a1a;">1,842</div><div class="t" style="left:641.70px;top:770.68px;font:normal bold 15px/15px 'Liberation Sans', sans-serif;transform:scale(1.2700,1.1000);color:#1a1a1a;">160</div><div class="t" style="left:739.65px;top:770.68px;font:normal bold 15px/15px 'Liberation Sans', sans-serif;transform:scale(1.2700,1.1000);color:#1a1a1a;">178</div><div class="t" style="left:837.60px;top:770.68px;font:normal bold 15px/15px 'Liberation Sans', sans-serif;transform:scale(1.2700,1.1000);color:#1a1a1a;">148</div><div class="t" style="left:935.55px;top:770.68px;font:normal bold 15px/15px 'Liberation Sans', sans-serif;transform:scale(1.2700,1.1000);color:#1a1a1a;">160</div><div class="t" style="left:1033.50px;top:770.68px;font:normal bold 15px/15px 'Liberation Sans', sans-serif;transform:scale(1.2700,1.1000);color:#1a1a1a;">145</div><div class="t" style="left:1130.18px;top:770.68px;font:normal bold 15px/15px 'Liberation Sans', sans-serif;transform:scale(1.2700,1.1000);color:#1a1a1a;">144</div><div class="t" style="left:1229.40px;top:770.68px;font:normal bold 15px/15px 'Liberation Sans', sans-serif;transform:scale(1.2700,1.1000);color:#1a1a1a;">145</div><div class="t" style="left:1326.08px;top:770.68px;font:normal bold 15px/15px 'Liberation Sans', sans-serif;transform:scale(1.2700,1.1000);color:#1a1a1a;">144</div><div class="t" style="left:1425.30px;top:770.68px;font:normal bold 15px/15px 'Liberation Sans', sans-serif;transform:scale(1.2700,1.1000);color:#1a1a1a;">145</div><div class="t" style="left:1523.25px;top:770.68px;font:normal bold 15px/15px 'Liberation Sans', sans-serif;transform:scale(1.2700,1.1000);color:#1a1a1a;">158</div><div class="t" style="left:1621.20px;top:770.68px;font:normal bold 15px/15px 'Liberation Sans', sans-serif;transform:scale(1.2700,1.1000);color:#1a1a1a;">160</div><div class="t" style="left:1719.15px;top:770.68px;font:normal bold 15px/15px 'Liberation Sans', sans-serif;transform:scale(1.2700,1.1000);color:#1a1a1a;">156</div><div class="t" style="left:210.30px;top:805.63px;font:normal normal 15px/15px 'Liberation Sans', sans-serif;transform:scale(1.1131,1.1000);color:#424242;">Travel Expense</div><div class="t" style="left:546.59px;top:805.63px;font:normal normal 15px/15px 'Liberation Sans', sans-serif;transform:scale(1.1550,1.1000);color:#3a3a3a;">171</div><div class="t" style="left:752.12px;top:805.63px;font:normal normal 15px/15px 'Liberation Sans', sans-serif;transform:scale(1.1550,1.1000);color:#3a3a3a;">10</div><div class="t" style="left:850.07px;top:805.63px;font:normal normal 15px/15px 'Liberation Sans', sans-serif;transform:scale(1.1550,1.1000);color:#3a3a3a;">39</div><div class="t" style="left:957.66px;top:805.63px;font:normal normal 15px/15px 'Liberation Sans', sans-serif;transform:scale(1.1550,1.1000);color:#3a3a3a;">6</div><div class="t" style="left:1045.97px;top:805.63px;font:normal normal 15px/15px 'Liberation Sans', sans-serif;transform:scale(1.1550,1.1000);color:#3a3a3a;">10</div><div class="t" style="left:1339.82px;top:805.63px;font:normal normal 15px/15px 'Liberation Sans', sans-serif;transform:scale(1.1550,1.1000);color:#3a3a3a;">12</div><div class="t" style="left:1535.72px;top:805.63px;font:normal normal 15px/15px 'Liberation Sans', sans-serif;transform:scale(1.1550,1.1000);color:#3a3a3a;">81</div><div class="t" style="left:1633.67px;top:805.63px;font:normal normal 15px/15px 'Liberation Sans', sans-serif;transform:scale(1.1550,1.1000);color:#3a3a3a;">14</div><div class="t" style="left:196.40px;top:840.58px;font:normal bold 15px/15px 'Liberation Sans', sans-serif;transform:scale(1.1983,1.1000);color:#1a1a1a;">Total Operating Expenses</div><div class="t" style="left:527.86px;top:840.58px;font:normal bold 15px/15px 'Liberation Sans', sans-serif;transform:scale(1.2700,1.1000);color:#1a1a1a;">8,076</div><div class="t" style="left:641.70px;top:840.58px;font:normal bold 15px/15px 'Liberation Sans', sans-serif;transform:scale(1.2700,1.1000);color:#1a1a1a;">640</div><div class="t" style="left:739.65px;top:840.58px;font:normal bold 15px/15px 'Liberation Sans', sans-serif;transform:scale(1.2700,1.1000);color:#1a1a1a;">666</div><div class="t" style="left:836.33px;top:840.58px;font:normal bold 15px/15px 'Liberation Sans', sans-serif;transform:scale(1.2700,1.1000);color:#1a1a1a;">674</div><div class="t" style="left:934.28px;top:840.58px;font:normal bold 15px/15px 'Liberation Sans', sans-serif;transform:scale(1.2700,1.1000);color:#1a1a1a;">674</div><div class="t" style="left:1033.50px;top:840.58px;font:normal bold 15px/15px 'Liberation Sans', sans-serif;transform:scale(1.2700,1.1000);color:#1a1a1a;">668</div><div class="t" style="left:1130.18px;top:840.58px;font:normal bold 15px/15px 'Liberation Sans', sans-serif;transform:scale(1.2700,1.1000);color:#1a1a1a;">654</div><div class="t" style="left:1229.40px;top:840.58px;font:normal bold 15px/15px 'Liberation Sans', sans-serif;transform:scale(1.2700,1.1000);color:#1a1a1a;">659</div><div class="t" style="left:1327.35px;top:840.58px;font:normal bold 15px/15px 'Liberation Sans', sans-serif;transform:scale(1.2700,1.1000);color:#1a1a1a;">670</div><div class="t" style="left:1425.30px;top:840.58px;font:normal bold 15px/15px 'Liberation Sans', sans-serif;transform:scale(1.2700,1.1000);color:#1a1a1a;">653</div><div class="t" style="left:1521.98px;top:840.58px;font:normal bold 15px/15px 'Liberation Sans', sans-serif;transform:scale(1.2700,1.1000);color:#1a1a1a;">754</div><div class="t" style="left:1621.20px;top:840.58px;font:normal bold 15px/15px 'Liberation Sans', sans-serif;transform:scale(1.2700,1.1000);color:#1a1a1a;">692</div><div class="t" style="left:1719.15px;top:840.58px;font:normal bold 15px/15px 'Liberation Sans', sans-serif;transform:scale(1.2700,1.1000);color:#1a1a1a;">672</div><div class="t" style="left:180.82px;top:875.53px;font:normal bold 15px/15px 'Liberation Sans', sans-serif;transform:scale(1.1818,1.1000);color:#1a1a1a;">EBITDA</div><div class="t" style="left:497.87px;top:875.53px;font:normal bold 15px/15px 'Liberation Sans', sans-serif;transform:scale(1.2700,1.1000);color:#1a1a1a;">17,083</div><div class="t" style="left:622.30px;top:875.53px;font:normal bold 15px/15px 'Liberation Sans', sans-serif;transform:scale(1.2700,1.1000);color:#1a1a1a;">842</div><div class="t" style="left:704.36px;top:875.53px;font:normal bold 15px/15px 'Liberation Sans', sans-serif;transform:scale(1.2700,1.1000);color:#1a1a1a;">1,403</div><div class="t" style="left:802.31px;top:875.53px;font:normal bold 15px/15px 'Liberation Sans', sans-serif;transform:scale(1.2700,1.1000);color:#1a1a1a;">2,726</div><div class="t" style="left:916.15px;top:875.53px;font:normal bold 15px/15px 'Liberation Sans', sans-serif;transform:scale(1.2700,1.1000);color:#1a1a1a;">823</div><div class="t" style="left:1014.10px;top:875.53px;font:normal bold 15px/15px 'Liberation Sans', sans-serif;transform:scale(1.2700,1.1000);color:#1a1a1a;">820</div><div class="t" style="left:1112.05px;top:875.53px;font:normal bold 15px/15px 'Liberation Sans', sans-serif;transform:scale(1.2700,1.1000);color:#1a1a1a;">870</div><div class="t" style="left:1194.11px;top:875.53px;font:normal bold 15px/15px 'Liberation Sans', sans-serif;transform:scale(1.2700,1.1000);color:#1a1a1a;">1,241</div><div class="t" style="left:1292.06px;top:875.53px;font:normal bold 15px/15px 'Liberation Sans', sans-serif;transform:scale(1.2700,1.1000);color:#1a1a1a;">2,380</div><div class="t" style="left:1390.01px;top:875.53px;font:normal bold 15px/15px 'Liberation Sans', sans-serif;transform:scale(1.2700,1.1000);color:#1a1a1a;">2,080</div><div class="t" style="left:1487.96px;top:875.53px;font:normal bold 15px/15px 'Liberation Sans', sans-serif;transform:scale(1.2700,1.1000);color:#1a1a1a;">1,507</div><div class="t" style="left:1585.91px;top:875.53px;font:normal bold 15px/15px 'Liberation Sans', sans-serif;transform:scale(1.2700,1.1000);color:#1a1a1a;">1,403</div><div class="t" style="left:1699.75px;top:875.53px;font:normal bold 15px/15px 'Liberation Sans', sans-serif;transform:scale(1.2700,1.1000);color:#1a1a1a;">988</div><div class="t" style="left:160.78px;top:948.79px;font:normal normal 19.5px/19.5px 'Liberation Sans', sans-serif;transform:scaleX(1.1194);color:#555;">Product Gross Margin vs Operating Income</div><div class="t" style="left:1024.50px;top:948.69px;font:normal normal 19.5px/19.5px 'Liberation Sans', sans-serif;transform:scaleX(1.0687);color:#555;">OPEX by Department</div><div class="t" style="left:244.50px;top:1182.10px;font:normal normal 15px/15px 'Liberation Sans', sans-serif;color:#5f5f5f;">0</div><div class="t" style="left:186.11px;top:1137.25px;font:normal normal 15px/15px 'Liberation Sans', sans-serif;color:#5f5f5f;">1,000,000</div><div class="t" style="left:186.11px;top:1092.40px;font:normal normal 15px/15px 'Liberation Sans', sans-serif;color:#5f5f5f;">2,000,000</div><div class="t" style="left:186.11px;top:1047.55px;font:normal normal 15px/15px 'Liberation Sans', sans-serif;color:#5f5f5f;">3,000,000</div><div class="t" style="left:186.11px;top:1002.70px;font:normal normal 15px/15px 'Liberation Sans', sans-serif;color:#5f5f5f;">4,000,000</div><div class="t" style="left:431.79px;top:1303.65px;font:normal normal 14px/14px 'Liberation Sans', sans-serif;transform:scaleX(1.0062);color:#666;">Product Gross Margin</div><div class="t" style="left:596.60px;top:1303.65px;font:normal normal 14px/14px 'Liberation Sans', sans-serif;transform:scaleX(0.9839);color:#666;">Operating Income</div><div class="t" style="left:1206.00px;top:1303.65px;font:normal normal 14px/14px 'Liberation Sans', sans-serif;transform:scaleX(0.9975);color:#666;">Finance</div><div class="t" style="left:1284.49px;top:1303.65px;font:normal normal 14px/14px 'Liberation Sans', sans-serif;transform:scaleX(1.0087);color:#666;">Marketing</div><div class="t" style="left:1372.47px;top:1303.65px;font:normal normal 14px/14px 'Liberation Sans', sans-serif;transform:scaleX(1.0309);color:#666;">HR</div><div class="t" style="left:1421.32px;top:1303.65px;font:normal normal 14px/14px 'Liberation Sans', sans-serif;transform:scaleX(0.9840);color:#666;">IT</div><div class="t" style="left:1463.00px;top:1303.65px;font:normal normal 14px/14px 'Liberation Sans', sans-serif;transform:scaleX(0.9651);color:#666;">Sales</div><div class="t" style="left:1525.70px;top:1303.65px;font:normal normal 14px/14px 'Liberation Sans', sans-serif;transform:scaleX(0.9873);color:#666;">Service</div><div class="t" style="left:1599.39px;top:1303.65px;font:normal normal 14px/14px 'Liberation Sans', sans-serif;transform:scaleX(1.0101);color:#666;">Production</div>
</body></html>
